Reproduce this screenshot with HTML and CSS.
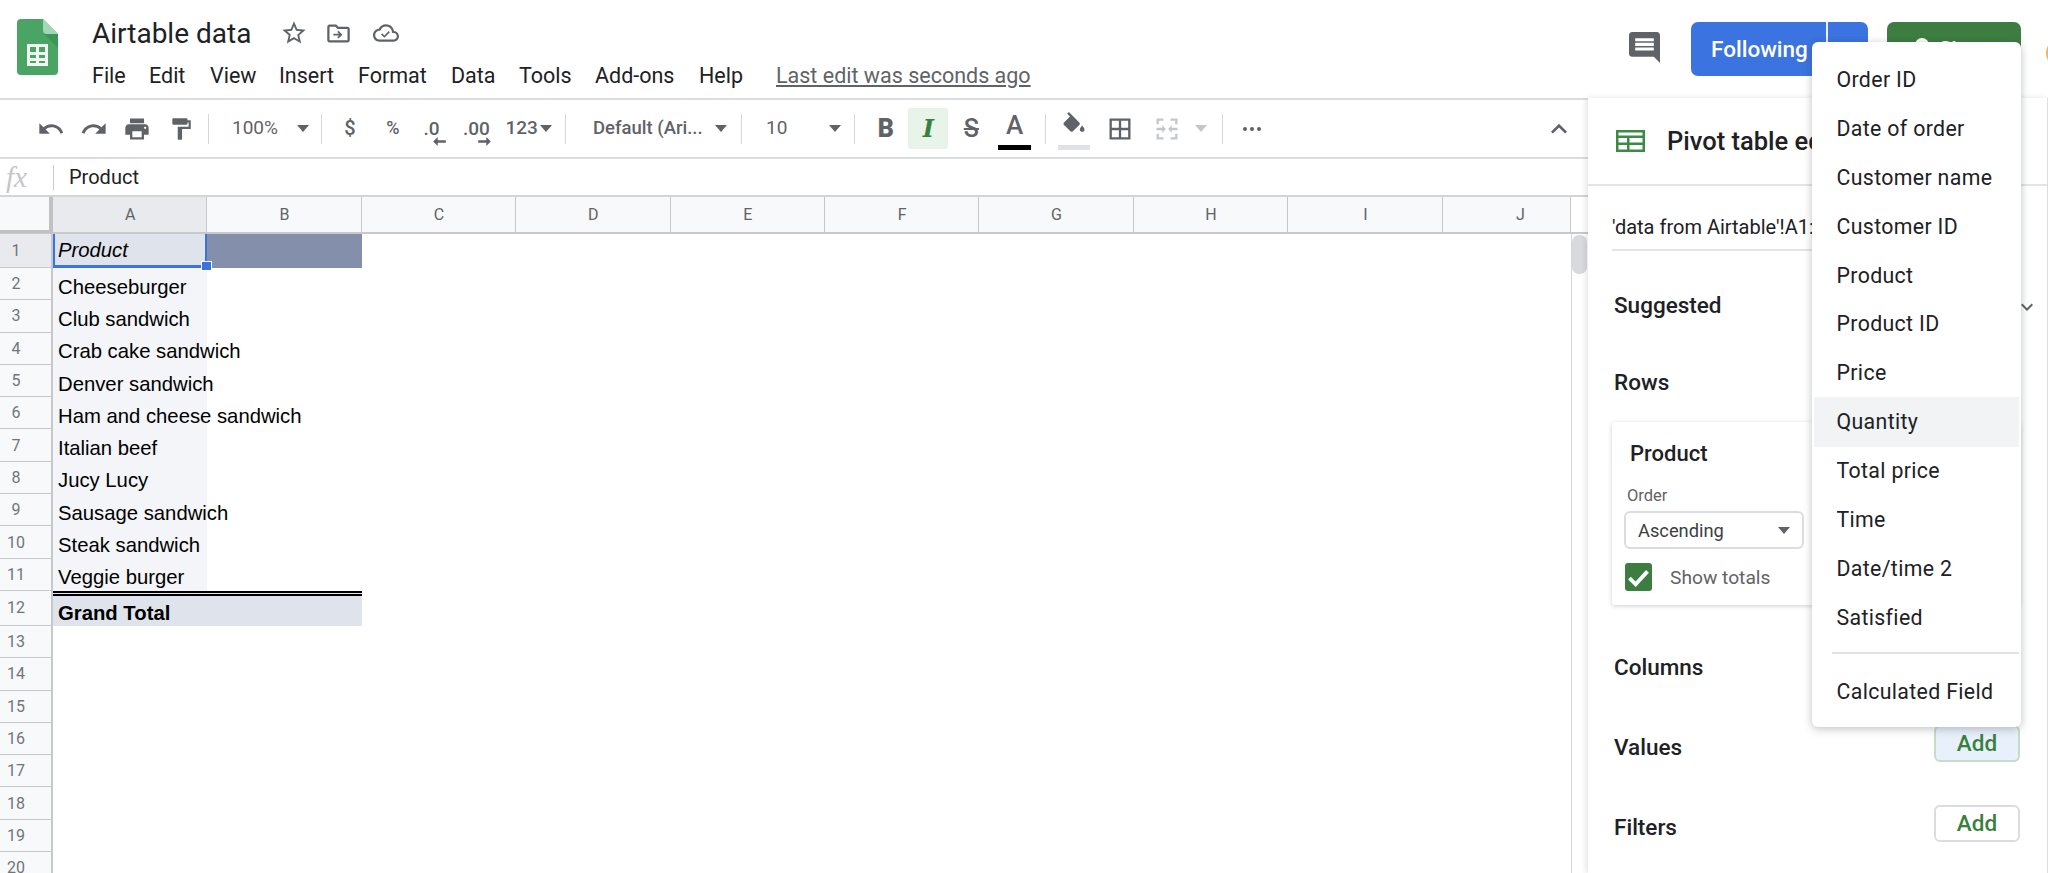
FILE: index.html
```html
<!DOCTYPE html>
<html lang="en">
<head>
<meta charset="utf-8">
<title>Airtable data</title>
<link rel="stylesheet" href="styles.css">
</head>
<body>
<div class="app">
  <header class="top">
    <svg class="logo" viewBox="0 0 41 56">
      <path d="M4 0H26L41 15V52a4 4 0 0 1-4 4H4a4 4 0 0 1-4-4V4a4 4 0 0 1 4-4z" fill="#4aa564"/>
      <path d="M26 0L41 15H30a4 4 0 0 1-4-4z" fill="#a3d6b4"/>
      <path d="M27 15L41 29V15z" fill="#2f8a4c" opacity=".55"/>
      <path d="M10 25H31V47H10zM13 28V33H19V28zM22 28V33H28V28zM13 36V39H19V36zM22 36V39H28V36zM13 42V44H19V42zM22 42V44H28V42z" fill="#f1f6f2" fill-rule="evenodd"/>
    </svg>
    <div class="doc">
      <div class="title-row">
        <span class="title">Airtable data</span>
        <svg class="ic star" viewBox="0 0 24 24"><path d="M22 9.24l-7.19-.62L12 2 9.19 8.63 2 9.24l5.46 4.73L5.82 21 12 17.27 18.18 21l-1.63-7.03L22 9.24zM12 15.4l-3.76 2.27 1-4.28-3.32-2.88 4.38-.38L12 6.1l1.71 4.04 4.38.38-3.32 2.88 1 4.28L12 15.4z"/></svg>
        <svg class="ic move" viewBox="0 0 24 24"><path d="M20 6h-8l-2-2H4c-1.1 0-1.99.9-1.99 2L2 18c0 1.1.9 2 2 2h16c1.1 0 2-.9 2-2V8c0-1.1-.9-2-2-2zm0 12H4V6h5.17l2 2H20v10z"/><path d="M12 9.5l-1.1 1.1 1.6 1.6H7.5v1.6h5l-1.6 1.6 1.1 1.1 3.5-3.5z"/></svg>
        <svg class="ic cloud" viewBox="0 0 24 24"><path d="M19.35 10.04C18.67 6.59 15.64 4 12 4 9.11 4 6.6 5.64 5.35 8.04 2.34 8.36 0 10.91 0 14c0 3.31 2.69 6 6 6h13c2.76 0 5-2.24 5-5 0-2.64-2.05-4.78-4.65-4.96zM19 18H6c-2.21 0-4-1.79-4-4 0-2.05 1.53-3.76 3.56-3.97l1.07-.11.5-.95C8.08 7.14 9.94 6 12 6c2.62 0 4.88 1.86 5.39 4.43l.3 1.5 1.53.11c1.56.1 2.78 1.41 2.78 2.96 0 1.65-1.35 3-3 3z"/><path d="M10.5 14.2l-2-2-1.1 1.1 3.1 3.1 5.1-5.1-1.1-1.1z"/></svg>
      </div>
      <nav class="menubar">
        <span class="m-file">File</span><span class="m-edit">Edit</span><span class="m-view">View</span><span class="m-insert">Insert</span><span class="m-format">Format</span><span class="m-data">Data</span><span class="m-tools">Tools</span><span class="m-addons">Add-ons</span><span class="m-help">Help</span>
        <span class="last-edit">Last edit was seconds ago</span>
      </nav>
    </div>
    <div class="top-right">
      <svg class="comment" viewBox="2 2 20 20"><path d="M21.99 4c0-1.1-.89-2-1.99-2H4c-1.1 0-2 .9-2 2v12c0 1.1.9 2 2 2h14l4 4-.01-18zM18 14H6v-2h12v2zm0-3H6V9h12v2zm0-3H6V6h12v2z"/></svg>
      <div class="follow"><span class="follow-main">Following</span><span class="follow-arrow"></span></div>
      <div class="share"><span class="share-head"></span><span>Share</span></div>
    </div>
    <span class="avatar"></span>
  </header>

  <div class="main">
    <div class="work">
      <div class="toolbar">
        <svg class="tb undo" viewBox="0 0 24 24"><path d="M12.5 8c-2.65 0-5.05.99-6.9 2.6L2 7v9h9l-3.62-3.62c1.39-1.16 3.16-1.88 5.12-1.88 3.54 0 6.55 2.31 7.6 5.5l2.37-.78C21.08 11.03 17.15 8 12.5 8z"/></svg>
        <svg class="tb redo" viewBox="0 0 24 24"><path d="M18.4 10.6C16.55 8.99 14.15 8 11.5 8c-4.65 0-8.58 3.03-9.96 7.22L3.9 16c1.05-3.19 4.05-5.5 7.6-5.5 1.95 0 3.73.72 5.12 1.88L13 16h9V7l-3.6 3.6z"/></svg>
        <svg class="tb print" viewBox="0 0 24 24"><path d="M19 8H5c-1.66 0-3 1.34-3 3v6h4v4h12v-4h4v-6c0-1.66-1.34-3-3-3zm-3 11H8v-5h8v5zm3-7c-.55 0-1-.45-1-1s.45-1 1-1 1 .45 1 1-.45 1-1 1zm-1-9H6v4h12V3z"/></svg>
        <svg class="tb paint" viewBox="0 0 24 24"><path d="M18 4V3c0-.55-.45-1-1-1H5c-.55 0-1 .45-1 1v4c0 .55.45 1 1 1h12c.55 0 1-.45 1-1V6h1v4H9v11c0 .55.45 1 1 1h2c.55 0 1-.45 1-1v-9h8V4h-3z"/></svg>
        <i class="sep"></i>
        <span class="tt zoomv">100%</span><i class="caret c-zoom"></i>
        <i class="sep"></i>
        <span class="tt dollar">$</span>
        <span class="tt pct">%</span>
        <span class="tt dec0">.0<svg class="dec-arrow" viewBox="0 0 14 10"><path d="M0 5L5 0V3.5H14V6.5H5V10z"/></svg></span>
        <span class="tt dec00">.00<svg class="dec-arrow" viewBox="0 0 14 10"><path d="M14 5L9 0V3.5H0V6.5H9V10z"/></svg></span>
        <span class="tt fmt">123</span><i class="caret c-fmt"></i>
        <i class="sep"></i>
        <span class="tt font">Default (Ari...</span><i class="caret c-font"></i>
        <i class="sep"></i>
        <span class="tt size">10</span><i class="caret c-size"></i>
        <i class="sep"></i>
        <span class="fmtbtn bold">B</span>
        <span class="fmtbtn italic">I</span>
        <span class="fmtbtn strike">S</span>
        <span class="fmtbtn color">A</span>
        <i class="sep"></i>
        <span class="fill-wrap"><svg class="tb fill" viewBox="0 0 24 24"><path d="M16.56 8.94L7.62 0 6.21 1.41l2.38 2.38-5.15 5.15c-.59.59-.59 1.54 0 2.12l5.5 5.5c.29.29.68.44 1.06.44s.77-.15 1.06-.44l5.5-5.5c.59-.58.59-1.53 0-2.12zM19 11.5s-2 2.17-2 3.5c0 1.1.9 2 2 2s2-.9 2-2c0-1.33-2-3.5-2-3.5z"/></svg></span>
        <svg class="tb grid-ic" viewBox="0 0 24 24"><path d="M3 3v18h18V3H3zm8 16H5v-6h6v6zm0-8H5V5h6v6zm8 8h-6v-6h6v6zm0-8h-6V5h6v6z"/></svg>
        <svg class="tb merge" viewBox="0 0 24 24"><path d="M3 3h6v2H5v3H3zM15 3h6v5h-2V5h-4zM3 16h2v3h4v2H3zM19 16h2v5h-6v-2h4zM3 11h5V8.5L11 12l-3 3.500V13H3zM21 11h-5V8.5L13 12l3 3.500V13h5z"/></svg>
        <i class="caret c-merge"></i>
        <i class="sep"></i>
        <span class="more"><i></i><i></i><i></i></span>
        <svg class="tb chev-up" viewBox="0 0 24 24"><path d="M7.41 15.41L12 10.83l4.59 4.58L18 14l-6-6-6 6z"/></svg>
      </div>

      <div class="formula">
        <span class="fx">fx</span>
        <i class="fx-sep"></i>
        <span class="fx-val">Product</span>
      </div>

      <div class="sheet">
        <div class="cols">
          <div class="corner"></div>
          <div class="col col-sel">A</div><div class="col">B</div><div class="col">C</div><div class="col">D</div><div class="col">E</div><div class="col">F</div><div class="col">G</div><div class="col">H</div><div class="col">I</div><div class="col col-last">J</div>
          <div class="col-end"></div>
        </div>
        <div class="body">
          <div class="rows">
            <div class="row row-1"><div class="rh rh-sel">1</div><div class="cell head-a">Product<span class="handle"></span></div><div class="cell head-b"></div></div>
            <div class="row row-2"><div class="rh">2</div><div class="cell a">Cheeseburger</div></div>
            <div class="row"><div class="rh">3</div><div class="cell a">Club sandwich</div></div>
            <div class="row"><div class="rh">4</div><div class="cell a">Crab cake sandwich</div></div>
            <div class="row"><div class="rh">5</div><div class="cell a">Denver sandwich</div></div>
            <div class="row"><div class="rh">6</div><div class="cell a">Ham and cheese sandwich</div></div>
            <div class="row"><div class="rh">7</div><div class="cell a">Italian beef</div></div>
            <div class="row"><div class="rh">8</div><div class="cell a">Jucy Lucy</div></div>
            <div class="row"><div class="rh">9</div><div class="cell a">Sausage sandwich</div></div>
            <div class="row"><div class="rh">10</div><div class="cell a">Steak sandwich</div></div>
            <div class="row"><div class="rh">11</div><div class="cell a">Veggie burger</div></div>
            <div class="row row-total"><div class="rh">12</div><div class="cell total">Grand Total</div></div>
            <div class="row"><div class="rh">13</div></div>
            <div class="row"><div class="rh">14</div></div>
            <div class="row"><div class="rh">15</div></div>
            <div class="row"><div class="rh">16</div></div>
            <div class="row"><div class="rh">17</div></div>
            <div class="row"><div class="rh">18</div></div>
            <div class="row"><div class="rh">19</div></div>
            <div class="row"><div class="rh">20</div></div>
          </div>
          <div class="scroll"><div class="thumb"></div></div>
        </div>
      </div>
    </div>

    <aside class="panel">
      <div class="panel-head">
        <svg class="pivot-ic" viewBox="0 0 29 22"><path d="M0 0H29V22H0zM2.500 2.500V5.500H26.500V2.500zM2.500 8V12.500H11V8zM13.500 8V12.500H26.500V8zM2.500 15V19.500H11V15zM13.500 15V19.500H26.500V15z" fill-rule="evenodd"/></svg>
        <span class="panel-title">Pivot table editor</span>
      </div>
      <div class="range">'data from Airtable'!A1:F1001</div>
      <div class="sec sec-sug"><span>Suggested</span><svg class="sug-chev" viewBox="0 0 24 24"><path d="M7.41 8.59L12 13.17l4.59-4.58L18 10l-6 6-6-6z"/></svg></div>
      <div class="sec sec-rows"><span>Rows</span></div>
      <div class="card">
        <div class="card-title">Product</div>
        <div class="card-label">Order</div>
        <div class="select"><span>Ascending</span><i class="caret c-select"></i></div>
        <div class="check-row">
          <span class="checkbox"><svg viewBox="0 0 24 24"><path d="M4 13l5.500 5.500L20 7" fill="none" stroke="#fff" stroke-width="3.400"/></svg></span>
          <span>Show totals</span>
        </div>
      </div>
      <div class="sec sec-next"><span>Columns</span></div>
      <div class="sec sec-next"><span>Values</span><span class="add add-hover">Add</span></div>
      <div class="sec sec-next"><span>Filters</span><span class="add">Add</span></div>
    </aside>
  </div>

  <div class="field-menu">
    <div class="fm-item">Order ID</div>
    <div class="fm-item">Date of order</div>
    <div class="fm-item">Customer name</div>
    <div class="fm-item">Customer ID</div>
    <div class="fm-item">Product</div>
    <div class="fm-item">Product ID</div>
    <div class="fm-item">Price</div>
    <div class="fm-item fm-hover">Quantity</div>
    <div class="fm-item">Total price</div>
    <div class="fm-item">Time</div>
    <div class="fm-item">Date/time 2</div>
    <div class="fm-item">Satisfied</div>
    <div class="fm-line"></div>
    <div class="fm-item">Calculated Field</div>
  </div>
</div>
</body>
</html>
```

FILE: styles.css
```css
* { box-sizing: border-box; }
html, body { margin: 0; height: 100%; background: #fff; overflow: hidden; }
body { font-family: Roboto, "Liberation Sans", sans-serif; color: #202124; }
.app { position: relative; width: 2048px; height: 873px; overflow: hidden; }
i { display: block; font-style: normal; }

/* header */
.top { height: 100px; display: flex; align-items: flex-start; border-bottom: 2px solid #dadce0; }
.logo { width: 41px; height: 56px; margin: 19px 0 0 17px; flex: none; }
.doc { margin-left: 34px; margin-top: 16px; flex: none; }
.title-row { display: flex; align-items: center; height: 34px; margin-left: 0; }
.title { font-size: 28px; width: 181px; color: #202124; white-space: nowrap; }
.ic { fill: #5f6368; flex: none; }
.star { width: 28px; height: 28px; margin-left: 7px; }
.move { width: 27px; height: 27px; margin-left: 17px; }
.cloud { width: 26px; height: 26px; margin-left: 21px; }
.menubar { display: flex; align-items: center; height: 32px; margin-top: 9px; font-size: 21.500px; color: #202124; }
.menubar span { flex: none; }
.m-file { width: 57px; }
.m-edit { width: 61px; }
.m-view { width: 69px; }
.m-insert { width: 79px; }
.m-format { width: 93px; }
.m-data { width: 68px; }
.m-tools { width: 76px; }
.m-addons { width: 104px; }
.m-help { width: 77px; }
.menubar .last-edit { color: #5f6368; text-decoration: underline; }
.top-right { margin-left: auto; display: flex; align-items: flex-start; padding-right: 27px; }
.comment { width: 31px; height: 31px; fill: #5f6368; margin: 32px 31px 0 0; }
.follow { display: flex; width: 177px; height: 54px; margin-top: 22px; border-radius: 7px; overflow: hidden; background: #3b73e0; color: #fff; }
.follow-main { width: 137px; padding-left: 20px; line-height: 54px; font-size: 22.500px; font-weight: 500; border-right: 2px solid #e8eefb; white-space: nowrap; }
.share { display: flex; justify-content: center; gap: 10px; width: 134px; height: 54px; margin: 22px 0 0 19px; border-radius: 7px; background: #3d7d42; color: #fff; font-size: 21px; font-weight: 500; line-height: 54px; }
.share-head { width: 14px; height: 14px; margin-top: 16px; border-radius: 50%; background: #fff; }
.avatar { position: absolute; left: 2046px; top: 38px; width: 30px; height: 30px; border-radius: 50%; background: #f0b552; }

.main { display: flex; height: 773px; }
.work { width: 1588px; flex: none; display: flex; flex-direction: column; }

/* toolbar */
.toolbar { height: 59px; flex: none; display: flex; align-items: center; padding-left: 37px; border-bottom: 2px solid #dadce0; color: #5f6368; }
.toolbar > * { flex: none; }
.tb { fill: #5f6368; width: 28px; height: 28px; }
.undo { margin-right: 15px; }
.redo { margin-right: 15px; }
.print { margin-right: 17px; }
.paint { margin-right: 14px; width: 26px; height: 26px; }
.sep { width: 1px; height: 30px; background: #d5d7da; }
.tt { font-size: 19px; color: #5f6368; white-space: nowrap; margin-top: -2px; }
.caret { width: 0; height: 0; border-left: 6.500px solid transparent; border-right: 6.500px solid transparent; border-top: 7px solid #5f6368; }
.zoomv { margin-left: 23px; width: 65px; }
.c-zoom { margin-right: 12px; }
.dollar { margin-left: 6.500px; width: 43px; font-weight: 500; font-size: 20px; text-align: center; }
.pct { width: 43px; text-align: center; font-size: 18px; font-weight: 500; }
.dec0, .dec00 { display: flex; flex-direction: column; align-items: center; height: 40px; padding-top: 9px; line-height: 22px; font-weight: 500; font-size: 19px; margin-top: 0; }
.dec0 { width: 23px; margin-left: 5.500px; }
.dec00 { width: 30px; margin-left: 18.500px; }
.dec-arrow { width: 13px; height: 9px; fill: #5f6368; margin: -3px 0 0 16px; flex: none; }
.fmt { margin-left: 14px; width: 34px; font-weight: 500; }
.c-fmt { margin-right: 13px; }
.font { margin-left: 27.500px; width: 122px; font-size: 18.500px; font-weight: 500; }
.c-font { margin-right: 14px; }
.size { margin-left: 24px; width: 63px; }
.c-size { margin-right: 13px; }
.fmtbtn { display: flex; align-items: center; justify-content: center; font-size: 25px; color: #5f6368; font-family: Roboto, sans-serif; }
.bold { font-weight: 900; width: 34px; margin-left: 12.400px; margin-right: 7px; padding-left: 3px; }
.italic { width: 40px; height: 41px; border-radius: 3px; background: #e8f3e9; color: #37813c; font-weight: 700; font-style: italic; font-family: "DejaVu Serif", serif; font-size: 24px; }
.strike { width: 46px; text-decoration: line-through; font-weight: 500; }
.color { width: 33px; height: 42px; align-items: flex-start; font-weight: 500; font-size: 26px; line-height: 34px; border-bottom: 5px solid #000; margin: 0 14px 0 3.700px; }
.fill-wrap { display: flex; justify-content: center; width: 32px; height: 42px; margin-left: 12px; border-bottom: 5px solid #dfe3e8; }
.fill { width: 28px; height: 28px; margin-top: 4px; }
.grid-ic { margin-left: 16px; }
.merge { margin-left: 19px; fill: #c4c7ca; }
.c-merge { margin-left: 14px; margin-right: 15.300px; border-top-color: #c4c7ca; }
.more { display: flex; gap: 3px; margin-left: 19.300px; }
.more i { width: 4px; height: 4px; border-radius: 50%; background: #5f6368; }
.toolbar .chev-up { margin-left: auto; margin-right: 13px; width: 32px; height: 32px; }

/* formula bar */
.formula { height: 38px; flex: none; display: flex; align-items: center; border-bottom: 2px solid #d3d4d6; }
.fx { width: 53px; padding-left: 6px; font-family: "Liberation Serif", serif; font-style: italic; font-size: 29px; color: #c4c6c9; }
.fx-sep { width: 1px; height: 25px; background: #c8cacc; }
.fx-val { margin-left: 15px; font-size: 20px; color: #202124; }

/* grid */
.sheet { flex: 1; display: flex; flex-direction: column; min-height: 0; }
.cols { display: flex; height: 37px; flex: none; border-bottom: 2px solid #c6c8ca; background: #f8f9fa; }
.corner { width: 53px; flex: none; background: #f8f9fa; border-right: 4px solid #c0c1c3; border-bottom: 3px solid #c0c1c3; margin-bottom: -1px; }
.col { width: 154.400px; flex: none; display: flex; align-items: center; justify-content: center; padding-left: 1px; font-size: 16px; color: #5f6368; border-right: 1.500px solid #c6c8ca; }
.col-sel { background: #e8eaed; }
.col-last { width: 128px; padding-left: 29px; }
.col-end { flex: 1; background: #fff; }
.body { flex: 1; display: flex; min-height: 0; }
.rows { flex: 1; min-width: 0; }
.row { display: flex; height: 32.300px; }
.rh { width: 53px; flex: none; padding-right: 19px; display: flex; align-items: center; justify-content: center; font-size: 16px; color: #70757a; background: #f8f9fa; border-right: 2px solid #c6c8ca; border-bottom: 1.500px solid #c6c8ca; }
.rh-sel { background: #e8eaed; }
.row-1 { height: 34px; }
.row-total { height: 35px; }
.cell { width: 154.400px; flex: none; padding-left: 5px; display: flex; align-items: center; white-space: nowrap; font-family: "Liberation Sans", Arial, sans-serif; font-size: 20.300px; color: #000; }
.head-a { position: relative; font-style: italic; background: #dfe4ec; border: 2px solid #3b73e0; border-top: 0; border-bottom-width: 3px; padding: 2px 0 0 3px; }
.head-b { height: 34px; background: #8490ab; }
.handle { position: absolute; right: -7px; bottom: -6px; width: 11px; height: 10px; background: #3b73e0; border: 1px solid #fff; }
.a { background: #f3f5f8; padding-top: 6px; }
.total { width: 308.800px; background: #dfe4ec; font-weight: 700; border-top: 5px double #000; padding: 6px 0 0 5px; }
.scroll { width: 17px; flex: none; border-left: 1.500px solid #d5d6d8; padding: 1px 1px 0 0; }
.thumb { height: 39px; border-radius: 7px; background: #d7d9dc; }

/* side panel */
.panel { flex: 1; position: relative; z-index: 1; background: #fff; box-shadow: -2px 0 5px rgba(60,64,67,.14); border-right: 1px solid #dadce0; margin-top: -2px; padding-top: 2px; }
.panel-head { height: 86px; display: flex; align-items: center; padding: 0 0 3px 28px; border-bottom: 2px solid #e3e4e6; white-space: nowrap; overflow: hidden; }
.pivot-ic { width: 29px; height: 22px; fill: #3d8a46; flex: none; }
.panel-title { margin-left: 22px; font-size: 25.500px; font-weight: 500; color: #202124; }
.range { margin: 28px 0 0 24px; padding-bottom: 10px; width: 300px; height: 37px; line-height: 26px; font-size: 20px; color: #202124; border-bottom: 2px solid #e3e4e6; white-space: nowrap; overflow: hidden; }
.sec { display: flex; justify-content: space-between; align-items: flex-start; height: 40px; padding: 0 27px 0 26px; font-size: 22.500px; font-weight: 500; color: #202124; line-height: 45px; }
.sec-sug { margin-top: 32px; padding-right: 8px; }
.sug-chev { width: 24px; height: 24px; margin-top: 12px; fill: #5f6368; }
.sec-rows { margin-top: 36.500px; }
.sec-next { margin-top: 40px; }
.add { width: 86px; height: 37px; line-height: 32px; border: 2px solid #dadce0; border-radius: 6px; text-align: center; color: #37813c; font-weight: 500; background: #fff; }
.add-hover { background: #e8f0fb; border-color: #bfe0c4; }
.card { margin: 22.500px 27px 0 24px; height: 183px; padding: 17.500px 18px 0 12px; border-radius: 3px; box-shadow: 0 1px 4px rgba(60,64,67,.25); }
.card-title { font-size: 22px; font-weight: 500; line-height: 28px; padding-left: 6px; }
.card-label { margin-top: 18.500px; padding-left: 3px; font-size: 16.500px; line-height: 20px; color: #5f6368; }
.select { margin-top: 5px; width: 180px; height: 38px; display: flex; align-items: center; justify-content: space-between; padding: 0 12px; border: 2px solid #dadce0; border-radius: 6px; font-size: 18.300px; color: #3c4043; }
.check-row { margin-top: 14px; display: flex; align-items: center; gap: 18px; font-size: 19.200px; color: #5f6368; padding-left: 1px; }
.checkbox { width: 27px; height: 28px; border-radius: 3px; background: #3d7d42; display: block; }
.checkbox svg { display: block; width: 27px; height: 28px; }

/* field dropdown */
.field-menu { position: absolute; z-index: 5; left: 1812px; top: 42px; width: 209px; height: 685px; padding: 14px 2px 0; background: #fff; border-radius: 6px; box-shadow: 0 3px 10px rgba(60,64,67,.22), 0 0 6px rgba(60,64,67,.12); }
.fm-item { height: 48.900px; line-height: 48.900px; padding-left: 22.500px; font-size: 21.300px; letter-spacing: .35px; color: #202124; white-space: nowrap; }
.fm-hover { background: #f1f3f4; margin-top: -1px; height: 49.900px; padding-top: 1px; }
.fm-line { height: 2px; margin: 9.500px 0 14px 18px; background: #e0e1e3; }
```
